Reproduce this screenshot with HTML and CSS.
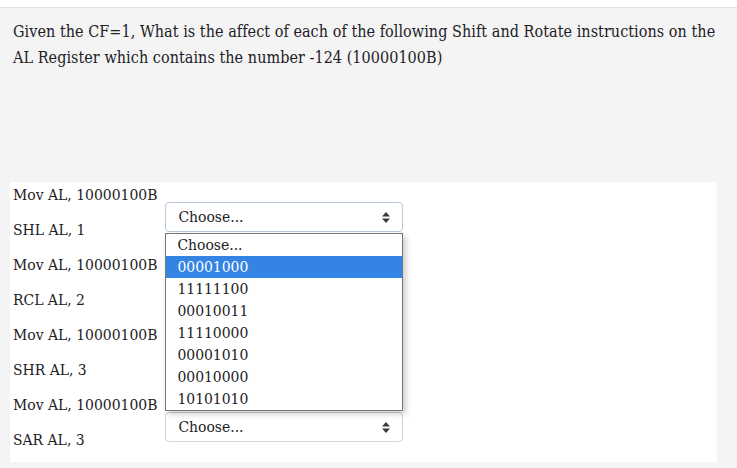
FILE: index.html
```html
<!DOCTYPE html>
<html lang="en">
<head>
    <meta charset="UTF-8">
    <title>Shift and Rotate question</title>
    <link rel="stylesheet" href="styles.css">
</head>
<body>
    <div class="topbar"></div>
    <div class="question">
        <div class="qtext">
            Given the CF=1, What is the affect of each of the following Shift and Rotate instructions on the<br>
            AL Register which contains the number -124 (10000100B)
        </div>

        <div class="answer">
            <div class="row">
                <div class="label">
                    <span>Mov AL, 10000100B</span>
                    <span>SHL AL, 1</span>
                </div>
                <div class="select-wrap">
                    <div class="select focused">
                        <span>Choose...</span>
                        <svg class="arrows" width="8" height="11" viewBox="0 0 8 11"><path d="M4 0 L8 4.5 H0 Z M4 11 L8 6.5 H0 Z" fill="#343a40"/></svg>
                    </div>
                    <ul class="popup">
                        <li>Choose...</li>
                        <li class="active">00001000</li>
                        <li>11111100</li>
                        <li>00010011</li>
                        <li>11110000</li>
                        <li>00001010</li>
                        <li>00010000</li>
                        <li>10101010</li>
                    </ul>
                </div>
            </div>
            <div class="row">
                <div class="label">
                    <span>Mov AL, 10000100B</span>
                    <span>RCL AL, 2</span>
                </div>
                <div class="select-wrap">
                    <div class="select covered">
                        <span>Choose...</span>
                        <svg class="arrows" width="8" height="11" viewBox="0 0 8 11"><path d="M4 0 L8 4.5 H0 Z M4 11 L8 6.5 H0 Z" fill="#343a40"/></svg>
                    </div>
                </div>
            </div>
            <div class="row">
                <div class="label">
                    <span>Mov AL, 10000100B</span>
                    <span>SHR AL, 3</span>
                </div>
                <div class="select-wrap">
                    <div class="select covered">
                        <span>Choose...</span>
                        <svg class="arrows" width="8" height="11" viewBox="0 0 8 11"><path d="M4 0 L8 4.5 H0 Z M4 11 L8 6.5 H0 Z" fill="#343a40"/></svg>
                    </div>
                </div>
            </div>
            <div class="row">
                <div class="label">
                    <span>Mov AL, 10000100B</span>
                    <span>SAR AL, 3</span>
                </div>
                <div class="select-wrap">
                    <div class="select">
                        <span>Choose...</span>
                        <svg class="arrows" width="8" height="11" viewBox="0 0 8 11"><path d="M4 0 L8 4.5 H0 Z M4 11 L8 6.5 H0 Z" fill="#343a40"/></svg>
                    </div>
                </div>
            </div>
        </div>
    </div>
</body>
</html>
```

FILE: styles.css
```css
body {
    margin: 0;
    font-family: "DejaVu Serif Condensed", "DejaVu Serif", "Liberation Serif", serif;
    font-size: 15.5px;
    color: #1d2125;
    background: #fff;
}

.topbar {
    height: 7px;
    border-bottom: 1px solid #dee2e6;
    background: #fff;
}

.question {
    background: #f4f4f5;
    height: 460px;
}

.qtext {
    padding: 11px 13px 0 13px;
    font-size: 16px;
    letter-spacing: 0.05px;
    line-height: 26px;
    height: 163px;
    white-space: nowrap;
}

.answer {
    background: #fff;
    margin: 0 20px 0 10px;
    padding-left: 3px;
}

.row {
    display: flex;
    align-items: flex-start;
    gap: 8px;
    height: 70px;
}

.label span {
    display: block;
    line-height: 26px;
    white-space: nowrap;
}

.label span + span {
    margin-top: 9px;
}

.select-wrap {
    position: relative;
    margin-top: 20px;
    width: 238px;
}

.select {
    display: flex;
    align-items: center;
    justify-content: space-between;
    box-sizing: border-box;
    height: 30px;
    padding: 0 12px;
    border: 1px solid #ced4da;
    border-radius: 4px;
    background: #fff;
}

.select.focused {
    border-color: #b9c8da;
}

.select.covered span {
    visibility: hidden;
}

.popup {
    position: absolute;
    top: 31px;
    left: 0;
    right: 0;
    margin: 0;
    padding: 0;
    list-style: none;
    background: #fff;
    border: 1px solid #767676;
    box-shadow: 3px 3px 6px rgba(0, 0, 0, 0.2);
    z-index: 2;
}

.popup li {
    height: 22px;
    line-height: 22px;
    padding-left: 11px;
}

.popup li.active {
    background: #3584e4;
    color: #fff;
}
```
